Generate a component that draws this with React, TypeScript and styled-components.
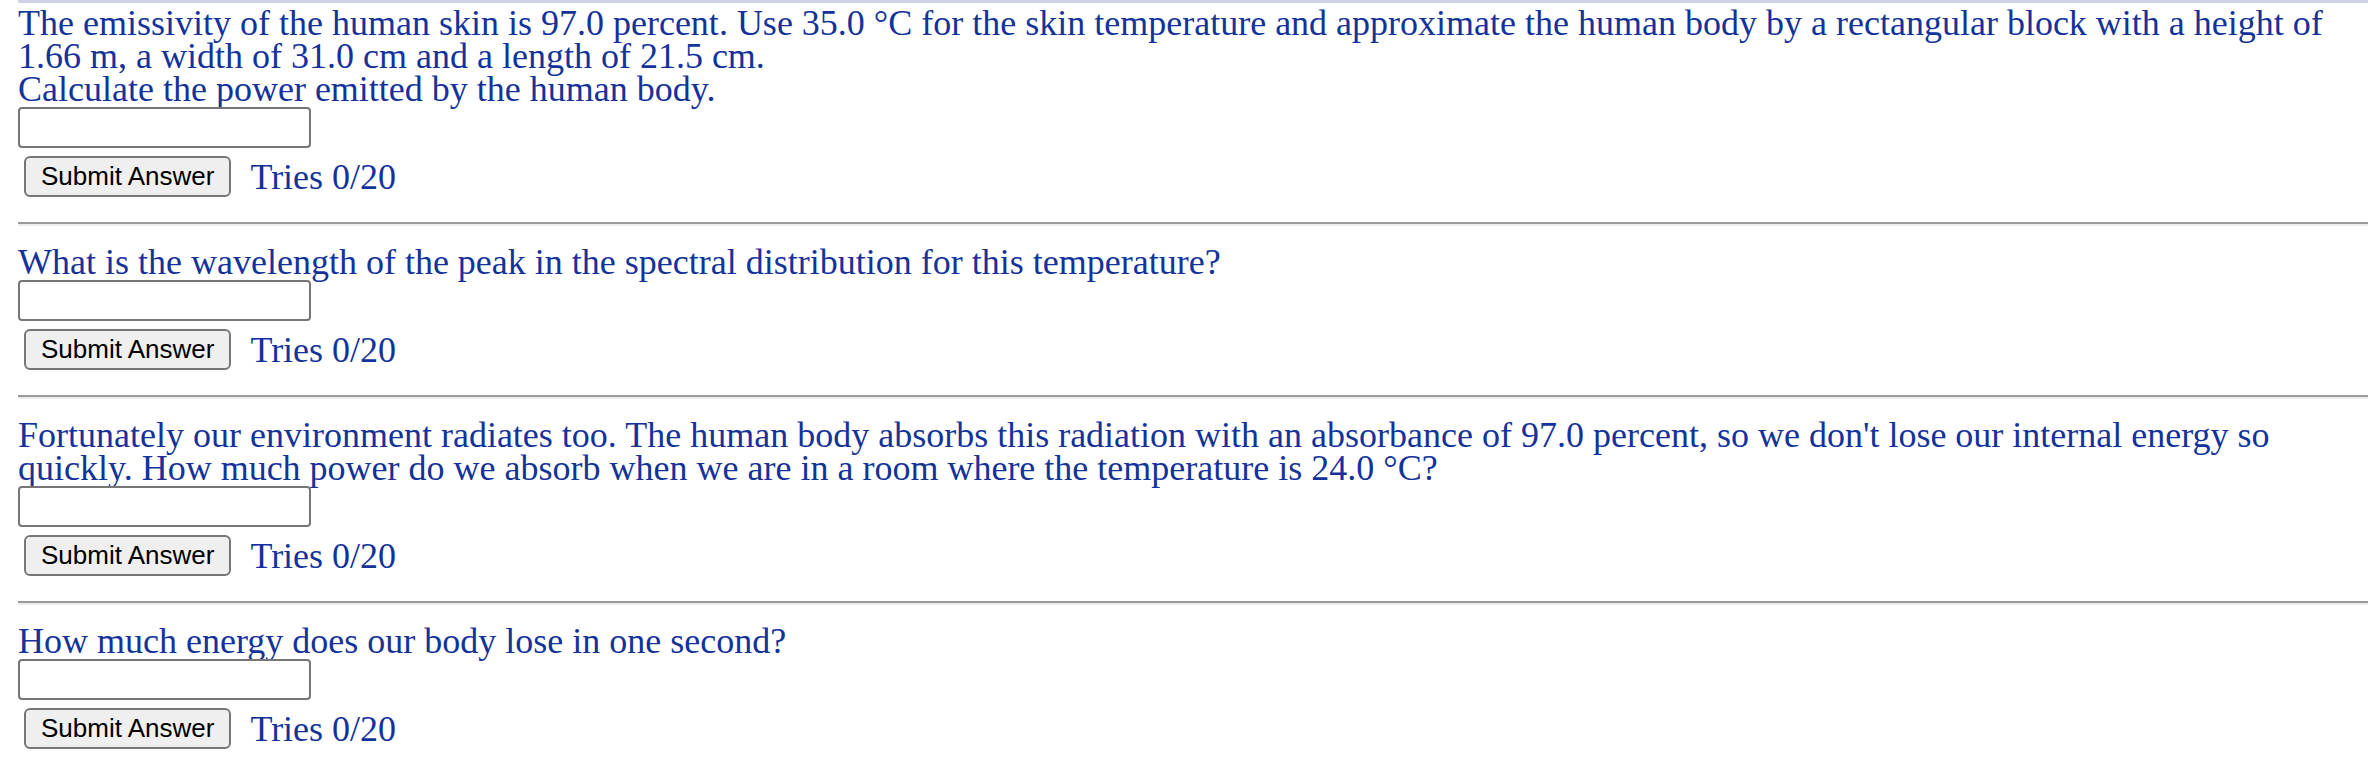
import React from "react";
import styled, { createGlobalStyle } from "styled-components";

const GlobalStyle = createGlobalStyle`
	html, body {
		margin: 0;
		padding: 0;
		background: #ffffff;
	}
	body {
		font-family: "Liberation Serif", "Times New Roman", serif;
	}
`;

const Page = styled.div`
	padding-left: 18px;
	color: #14339a;
`;

const TopRule = styled.div`
	height: 3px;
	background: #cfd2e4;
`;

const Block = styled.div<{ $first?: boolean }>`
	display: flex;
	flex-direction: column;
	align-items: flex-start;
	padding-top: ${(p) => (p.$first ? "4px" : "20px")};
`;

const Prompt = styled.div`
	font-size: 36px;
	line-height: 33px;
	align-self: stretch;
`;

const AnswerInput = styled.input`
	box-sizing: border-box;
	width: 293px;
	height: 41px;
	margin: 1px 0 0 0;
	border: 2px solid #767676;
	border-radius: 4px;
	background: #ffffff;
	font-size: 26px;
	padding: 0 6px;
`;

const SubmitRow = styled.div`
	display: flex;
	align-items: center;
	margin-top: 8px;
	gap: 19px;
`;

const SubmitButton = styled.button`
	box-sizing: border-box;
	height: 41px;
	margin-left: 6px;
	padding: 0 15px;
	border: 2px solid #767676;
	border-radius: 6px;
	background: #efefef;
	color: #000000;
	font-family: "Liberation Sans", Arial, sans-serif;
	font-size: 26px;
`;

const Tries = styled.span`
	font-size: 36px;
	line-height: 33px;
	padding-top: 2px;
`;

const Divider = styled.hr`
	margin: 25px 0 0 0;
	height: 0;
	border: none;
	border-top: 2px solid #9a9a9a;
	border-bottom: 2px solid #ececec;
`;

type Question = { id: string; text: React.ReactNode };

const questions: Question[] = [
	{
		id: "power",
		text: (
			<>
				The emissivity of the human skin is 97.0 percent. Use 35.0 °C for the skin temperature and approximate the
				human body by a rectangular block with a height of 1.66 m, a width of 31.0 cm and a length of 21.5 cm.
				<br />
				Calculate the power emitted by the human body.
			</>
		),
	},
	{
		id: "wavelength",
		text: "What is the wavelength of the peak in the spectral distribution for this temperature?",
	},
	{
		id: "absorb",
		text: "Fortunately our environment radiates too. The human body absorbs this radiation with an absorbance of 97.0 percent, so we don't lose our internal energy so quickly. How much power do we absorb when we are in a room where the temperature is 24.0 °C?",
	},
	{
		id: "energy",
		text: "How much energy does our body lose in one second?",
	},
];

export default function App() {
	return (
		<>
			<GlobalStyle />
			<Page>
				<TopRule />
				{questions.map((q, i) => (
					<React.Fragment key={q.id}>
						{i > 0 && <Divider />}
						<Block $first={i === 0}>
							<Prompt>{q.text}</Prompt>
							<AnswerInput type="text" />
							<SubmitRow>
								<SubmitButton type="button">Submit Answer</SubmitButton>
								<Tries>Tries 0/20</Tries>
							</SubmitRow>
						</Block>
					</React.Fragment>
				))}
			</Page>
		</>
	);
}
